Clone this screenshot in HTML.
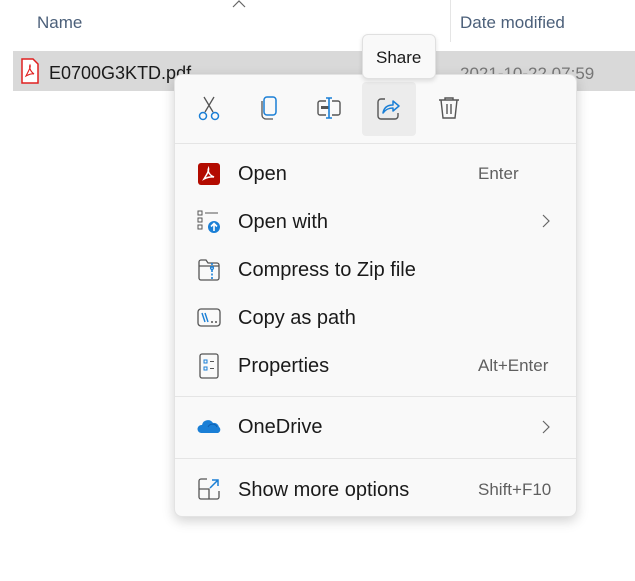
<!DOCTYPE html>
<html><head><style>
body{margin:0;width:635px;height:581px;background:#fff;position:relative;overflow:hidden;font-family:"Liberation Sans",sans-serif;}
.a{position:absolute}
.t{position:absolute;font-size:20px;color:#1a1a1a;line-height:24px}
.k{position:absolute;font-size:17px;color:#5f5f5f;left:478px;line-height:24px}
.ic{position:absolute}
</style></head><body>
<div class="t" style="left:37px;top:11px;font-size:17px;color:#4c607a">Name</div>
<svg class="a" style="left:232px;top:0" width="14" height="8"><path d="M1 7L7 1L13 7" fill="none" stroke="#666" stroke-width="1.2"/></svg>
<div class="a" style="left:450px;top:0;width:1px;height:42px;background:#e5e5e5"></div>
<div class="t" style="left:460px;top:11px;font-size:17px;color:#4c607a">Date modified</div>
<div class="a" style="left:13px;top:51px;width:622px;height:40px;background:#d9d9d9"></div>
<svg class="a" style="left:20px;top:58px" width="20" height="26"><path d="M2 1H13L18 6V25H2Z" fill="#fff" stroke="#e02020" stroke-width="1.5"/><path d="M6 18C9 12 11 9 10 7C9 9 10 13 14 16C11 15 8 17 6 18Z" fill="none" stroke="#e02020" stroke-width="1.1"/></svg>
<div class="t" style="left:49px;top:61px;font-size:18px">E0700G3KTD.pdf</div>
<div class="t" style="left:460px;top:62px;font-size:17px;color:#777">2021-10-22 07:59</div>

<div class="a" style="left:174px;top:74px;width:403px;height:443px;background:#f9f9f9;border-radius:8px;box-shadow:0 4px 12px rgba(0,0,0,.18);border:1px solid #e3e3e3;box-sizing:border-box"></div>
<div class="a" style="left:362px;top:82px;width:54px;height:54px;background:#ececec;border-radius:4px"></div>
<div class="a" style="left:362px;top:34px;width:74px;height:45px;background:#f9f9f9;border:1px solid #e0e0e0;border-radius:6px;box-shadow:0 2px 5px rgba(0,0,0,.12);box-sizing:border-box"></div>
<div class="t" style="left:376px;top:46px;font-size:17px">Share</div>

<svg class="ic" style="left:196px;top:95px" width="26" height="26"><path d="M8 2L17 17M18 2L9 17" stroke="#555" stroke-width="1.3" fill="none"/><circle cx="7" cy="21" r="3.5" fill="none" stroke="#1a7fd6" stroke-width="1.5"/><circle cx="19" cy="21" r="3.5" fill="none" stroke="#1a7fd6" stroke-width="1.5"/></svg>
<svg class="ic" style="left:256px;top:95px" width="26" height="26"><rect x="8" y="2" width="12" height="18" rx="3" fill="none" stroke="#1a7fd6" stroke-width="1.5"/><path d="M6 6V20A4 4 0 0 0 10 24H17" fill="none" stroke="#555" stroke-width="1.3"/></svg>
<svg class="ic" style="left:316px;top:95px" width="26" height="26"><path d="M10 6H4A2 2 0 0 0 2 8V18A2 2 0 0 0 4 20H10M16 6H22A2 2 0 0 1 24 8V18A2 2 0 0 1 22 20H16" fill="none" stroke="#555" stroke-width="1.4"/><rect x="5" y="11" width="8" height="3" fill="#555"/><path d="M13 3V23M10 3H16M10 23H16" stroke="#1a7fd6" stroke-width="1.6"/></svg>
<svg class="ic" style="left:376px;top:95px" width="26" height="26"><path d="M9 4H5A3 3 0 0 0 2 7V21A3 3 0 0 0 5 24H19A3 3 0 0 0 22 21V18" fill="none" stroke="#555" stroke-width="1.4"/><path d="M7 18C8 12 12 10 17 10V6L23 11L17 16V13C13 13 10 14 7 18Z" fill="none" stroke="#1a7fd6" stroke-width="1.5" stroke-linejoin="round"/></svg>
<svg class="ic" style="left:436px;top:95px" width="26" height="26"><path d="M3 5H23M9 5V3H17V5M5 5L7 23H19L21 5M11 9V19M15 9V19" fill="none" stroke="#555" stroke-width="1.4"/></svg>
<div class="a" style="left:175px;top:143px;width:401px;height:1px;background:#e5e5e5"></div>

<svg class="ic" style="left:198px;top:163px" width="22" height="22"><rect width="22" height="22" rx="3" fill="#b30b00"/><path d="M6 16C9 11 11 8 10.5 5.5C9.5 8 11 12 16 14C12 13.5 9 14.5 6 16Z" fill="none" stroke="#fff" stroke-width="1.5"/></svg>
<div class="t" style="left:238px;top:162px">Open</div><div class="k" style="top:162px">Enter</div>

<svg class="ic" style="left:197px;top:210px" width="26" height="26"><rect x="1" y="1" width="4" height="4" fill="none" stroke="#555"/><rect x="1" y="8" width="4" height="4" fill="none" stroke="#555"/><rect x="1" y="15" width="4" height="4" fill="none" stroke="#555"/><path d="M8 3H21" stroke="#555"/><circle cx="17" cy="17" r="6" fill="#1a7fd6"/><path d="M17 21V14M14 16.5L17 13.5L20 16.5" stroke="#fff" stroke-width="1.6" fill="none"/></svg>
<div class="t" style="left:238px;top:210px">Open with</div>
<svg class="a" style="left:541px;top:213px" width="10" height="16"><path d="M2 2L8 8L2 14" fill="none" stroke="#666" stroke-width="1.2"/></svg>

<svg class="ic" style="left:197px;top:258px" width="26" height="24"><path d="M2 4A2 2 0 0 1 4 2H9L11 5H20A2 2 0 0 1 22 7V20A2 2 0 0 1 20 22H4A2 2 0 0 1 2 20Z M2 8H22" fill="none" stroke="#555" stroke-width="1.3"/><path d="M15 5V21" stroke="#1a7fd6" stroke-width="1.6" stroke-dasharray="2 1.5"/><circle cx="15" cy="10" r="1.6" fill="none" stroke="#1a7fd6"/></svg>
<div class="t" style="left:238px;top:258px">Compress to Zip file</div>

<svg class="ic" style="left:197px;top:308px" width="26" height="20"><rect x="1" y="1" width="22" height="17" rx="3" fill="none" stroke="#555" stroke-width="1.3"/><path d="M5 5L8 14M8 5L11 14" stroke="#1a7fd6" stroke-width="1.4"/><circle cx="15" cy="14" r="1" fill="#555"/><circle cx="19" cy="14" r="1" fill="#555"/></svg>
<div class="t" style="left:238px;top:306px">Copy as path</div>

<svg class="ic" style="left:199px;top:353px" width="22" height="26"><rect x="1" y="1" width="18" height="24" rx="2" fill="none" stroke="#555" stroke-width="1.3"/><rect x="5" y="7" width="3" height="3" fill="none" stroke="#1a7fd6"/><rect x="5" y="14" width="3" height="3" fill="none" stroke="#1a7fd6"/><path d="M11 8.5H15M11 15.5H15" stroke="#555"/></svg>
<div class="t" style="left:238px;top:354px">Properties</div><div class="k" style="top:354px">Alt+Enter</div>
<div class="a" style="left:175px;top:396px;width:401px;height:1px;background:#e5e5e5"></div>

<svg class="ic" style="left:197px;top:418px" width="26" height="18"><path d="M4 15A4 4 0 0 1 5 7A6 6 0 0 1 16 5A5 5 0 0 1 22 9A3.5 3.5 0 0 1 21 15Z" fill="#1a7fd6"/><path d="M11 9A5 5 0 0 1 20 9" fill="none" stroke="#0f5fb0" stroke-width="1"/></svg>
<div class="t" style="left:238px;top:415px">OneDrive</div>
<svg class="a" style="left:541px;top:419px" width="10" height="16"><path d="M2 2L8 8L2 14" fill="none" stroke="#666" stroke-width="1.2"/></svg>
<div class="a" style="left:175px;top:458px;width:401px;height:1px;background:#e5e5e5"></div>

<svg class="ic" style="left:197px;top:477px" width="26" height="26"><path d="M10 2H4A2 2 0 0 0 2 4V20A2 2 0 0 0 4 22H20A2 2 0 0 0 22 20V14M2 12H12V22" fill="none" stroke="#555" stroke-width="1.3"/><path d="M13 11L21 3M15 3H21V9" fill="none" stroke="#1a7fd6" stroke-width="1.5"/></svg>
<div class="t" style="left:238px;top:478px">Show more options</div><div class="k" style="top:478px">Shift+F10</div>
</body></html>
